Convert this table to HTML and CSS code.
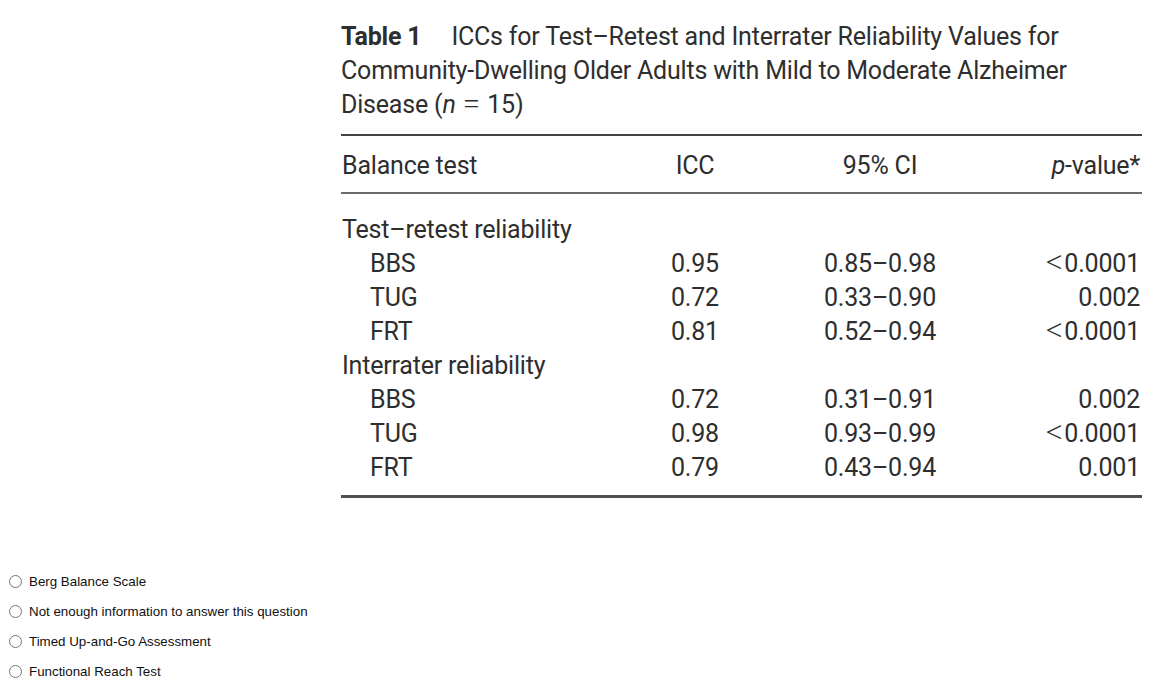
FILE: index.html
```html
<!DOCTYPE html>
<html lang="en">
<head>
<meta charset="utf-8">
<title>ICC question</title>
<link rel="stylesheet" href="styles.css">
</head>
<body>
<div class="question">
  <div class="figure">
    <div class="caption"><span class="tlabel">Table 1</span>ICCs for Test–Retest and Interrater Reliability Values for<br>Community-Dwelling Older Adults with Mild to Moderate Alzheimer<br>Disease (<i>n</i> <span class="eq">=</span> 15)</div>
    <div class="tbl">
      <div class="thead row">
        <div class="c1">Balance test</div>
        <div class="c2">ICC</div>
        <div class="c3">95% CI</div>
        <div class="c4"><i>p</i>-value*</div>
      </div>
      <div class="tbody">
        <div class="row"><div class="c1">Test–retest reliability</div><div class="c2"></div><div class="c3"></div><div class="c4"></div></div>
        <div class="row"><div class="c1 sub">BBS</div><div class="c2">0.95</div><div class="c3">0.85–0.98</div><div class="c4"><span class="lt">&lt;</span>0.0001</div></div>
        <div class="row"><div class="c1 sub">TUG</div><div class="c2">0.72</div><div class="c3">0.33–0.90</div><div class="c4">0.002</div></div>
        <div class="row"><div class="c1 sub">FRT</div><div class="c2">0.81</div><div class="c3">0.52–0.94</div><div class="c4"><span class="lt">&lt;</span>0.0001</div></div>
        <div class="row"><div class="c1">Interrater reliability</div><div class="c2"></div><div class="c3"></div><div class="c4"></div></div>
        <div class="row"><div class="c1 sub">BBS</div><div class="c2">0.72</div><div class="c3">0.31–0.91</div><div class="c4">0.002</div></div>
        <div class="row"><div class="c1 sub">TUG</div><div class="c2">0.98</div><div class="c3">0.93–0.99</div><div class="c4"><span class="lt">&lt;</span>0.0001</div></div>
        <div class="row"><div class="c1 sub">FRT</div><div class="c2">0.79</div><div class="c3">0.43–0.94</div><div class="c4">0.001</div></div>
      </div>
    </div>
  </div>
  <ul class="options">
    <li class="opt"><input type="radio" name="ans" id="o1"><label for="o1">Berg Balance Scale</label></li>
    <li class="opt"><input type="radio" name="ans" id="o2"><label for="o2">Not enough information to answer this question</label></li>
    <li class="opt"><input type="radio" name="ans" id="o3"><label for="o3">Timed Up-and-Go Assessment</label></li>
    <li class="opt"><input type="radio" name="ans" id="o4"><label for="o4">Functional Reach Test</label></li>
  </ul>
</div>
</body>
</html>
```
FILE: styles.css
```css
html, body {
  margin: 0;
  padding: 0;
  background: #ffffff;
}

.question {
  width: 1163px;
}

.figure {
  margin-left: 341px;
  width: 801px;
  padding-top: 20px;
  font-family: Roboto, "Liberation Sans", sans-serif;
  font-size: 25px;
  letter-spacing: -0.2px;
  line-height: 34px;
  color: #2e2e2e;
}

.caption {
  margin-bottom: 12px;
  white-space: nowrap;
}

.tlabel {
  font-weight: 700;
  margin-right: 30px;
}

.eq {
  font-family: "Liberation Serif", serif;
  font-size: 28px;
  line-height: 0;
  padding: 0 2px;
}

.tbl {
  border-top: 2px solid #444;
  border-bottom: 3px solid #505050;
}

.row {
  display: grid;
  grid-template-columns: 299px 110px 260px 132px;
  height: 34px;
}

.thead {
  height: auto;
  padding-top: 13px;
  padding-bottom: 9px;
  border-bottom: 2px solid #6a6a6a;
}

.tbody {
  padding-top: 19px;
  padding-bottom: 10px;
}

.c1 {
  padding-left: 1px;
  white-space: nowrap;
}

.c1.sub {
  padding-left: 29px;
}

.c2, .c3 {
  text-align: center;
}

.c4 {
  text-align: right;
  padding-right: 2px;
}

.lt {
  font-family: "Liberation Serif", serif;
  font-size: 30px;
  line-height: 0;
  margin-right: 2px;
}

.options {
  list-style: none;
  margin: 68px 0 0 0;
  padding: 0;
  font-family: "Liberation Sans", Arial, sans-serif;
  font-size: 13.33px;
  color: #111;
}

.opt {
  height: 30px;
  display: flex;
  align-items: center;
  padding-left: 9px;
}

.opt input {
  margin: 0 7px 0 0;
  width: 13px;
  height: 13px;
}
```
